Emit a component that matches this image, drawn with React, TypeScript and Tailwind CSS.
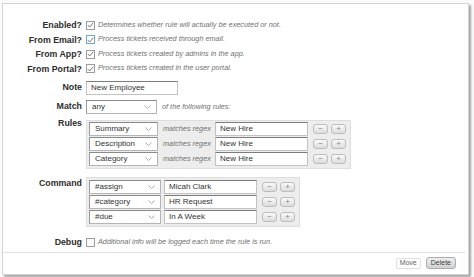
import React from "react";

const Chevron = () => (
  <svg width="7" height="4" viewBox="0 0 7 4" className="shrink-0">
    <polyline points="0.5,0.5 3.5,3.5 6.5,0.5" fill="none" stroke="#9a9a9a" strokeWidth="0.8" />
  </svg>
);

const Select = ({ value, w }: { value: string; w: string }) => (
  <div
    className={`${w} h-[14px] flex items-center justify-between bg-white border border-[#b5b5b5] border-t-[#8a8a8a] border-l-[#9a9a9a] pl-[5px] pr-[5px] text-[8px] text-[#333]`}
  >
    <span>{value}</span>
    <Chevron />
  </div>
);

const Input = ({ value, w }: { value: string; w: string }) => (
  <div
    className={`${w} h-[14px] flex items-center bg-white border border-[#c2c2c2] border-t-[#7c7c7c] pl-[4px] text-[8px] text-[#333]`}
  >
    {value}
  </div>
);

const SmallButton = ({ label }: { label: string }) => (
  <div className="w-[15px] h-[10px] flex items-center justify-center rounded-[3px] border border-[#bdbdbd] bg-gradient-to-b from-[#fafafa] to-[#dcdcdc] text-[8px] leading-none text-[#888]">
    {label}
  </div>
);

const Check = ({ checked, focus }: { checked?: boolean; focus?: boolean }) => (
  <div
    className={`w-[9px] h-[9px] shrink-0 flex items-center justify-center bg-white border ${
      focus ? "border-[#6fa8d8]" : "border-[#9d9d9d]"
    }`}
  >
    {checked && (
      <svg width="7" height="6" viewBox="0 0 7 6">
        <polyline points="0.8,3 2.7,5 6.3,0.7" fill="none" stroke="#6a6a6a" strokeWidth="0.9" />
      </svg>
    )}
  </div>
);

const Label = ({ text }: { text: string }) => (
  <div className="w-[79px] shrink-0 text-right font-bold text-[8.8px] leading-[12px] text-[#2e2e2e]">
    {text}
  </div>
);

const flags = [
  { label: "Enabled?", desc: "Determines whether rule will actually be executed or not." },
  { label: "From Email?", desc: "Process tickets received through email.", focus: true },
  { label: "From App?", desc: "Process tickets created by admins in the app." },
  { label: "From Portal?", desc: "Process tickets created in the user portal." },
];

const rules = ["Summary", "Description", "Category"];

const commands = [
  { cmd: "#assign", value: "Micah Clark" },
  { cmd: "#category", value: "HR Request" },
  { cmd: "#due", value: "In A Week" },
];

export default function App() {
  return (
    <div
      className="w-[474px] h-[277px] bg-[#fbfbfb] pt-[3px] pl-[2px]"
      style={{ fontFamily: '"Liberation Sans", Arial, sans-serif' }}
    >
      <div className="w-[467px] h-[272px] bg-white border border-[#d4d4d4] shadow-[2px_2px_2px_rgba(0,0,0,0.35)] flex flex-col">
        {/* Flags */}
        <div className="mt-[14px] flex flex-col">
          {flags.map((f) => (
            <div key={f.label} className="h-[14.5px] flex items-center">
              <Label text={f.label} />
              <div className="ml-[4px] flex items-center gap-[3px]">
                <Check checked focus={f.focus} />
                <span className="italic text-[7.3px] text-[#707070]">{f.desc}</span>
              </div>
            </div>
          ))}
        </div>

        {/* Note */}
        <div className="mt-[5px] flex items-start">
          <Label text="Note" />
          <div className="ml-[4px]">
            <Input value="New Employee" w="w-[92px]" />
          </div>
        </div>

        {/* Match */}
        <div className="mt-[5px] flex items-start">
          <Label text="Match" />
          <div className="ml-[4px] flex items-center gap-[5px]">
            <Select value="any" w="w-[71px]" />
            <span className="italic text-[7.3px] text-[#707070]">of the following rules:</span>
          </div>
        </div>

        {/* Rules */}
        <div className="mt-[3px] flex items-start">
          <Label text="Rules" />
          <div className="ml-[4px] mt-[3px] bg-[#ededed] border border-[#dedede] pl-[2px] pr-[4px] pt-[1px] pb-[2px] flex flex-col gap-y-[1px]">
            {rules.map((r) => (
              <div key={r} className="h-[14px] flex items-center">
                <Select value={r} w="w-[69px]" />
                <span className="ml-[5px] w-[52px] italic text-[7.3px] text-[#707070]">matches regex</span>
                <Input value="New Hire" w="w-[93px]" />
                <div className="ml-[5px] flex gap-[3px]">
                  <SmallButton label="−" />
                  <SmallButton label="+" />
                </div>
              </div>
            ))}
          </div>
        </div>

        {/* Command */}
        <div className="mt-[8px] flex items-start">
          <Label text="Command" />
          <div className="ml-[4px] bg-[#ededed] border border-[#dedede] pl-[2px] pr-[4px] pt-[2px] pb-[2px] flex flex-col gap-y-[1px]">
            {commands.map((c) => (
              <div key={c.cmd} className="h-[14px] flex items-center">
                <Select value={c.cmd} w="w-[72px]" />
                <div className="ml-[3px]">
                  <Input value={c.value} w="w-[93px]" />
                </div>
                <div className="ml-[5px] flex gap-[3px]">
                  <SmallButton label="−" />
                  <SmallButton label="+" />
                </div>
              </div>
            ))}
          </div>
        </div>

        {/* Debug */}
        <div className="mt-[9px] h-[12px] flex items-center">
          <Label text="Debug" />
          <div className="ml-[4px] flex items-center gap-[3px]">
            <Check />
            <span className="italic text-[7.3px] text-[#707070]">
              Additional info will be logged each time the rule is run.
            </span>
          </div>
        </div>

        {/* Footer */}
        <div className="mt-[4px] mr-[2px] border-t border-[#e2e2e2] flex justify-end items-center gap-[5px] pt-[4px] pr-[10px]">
          <div className="h-[11px] px-[3px] flex items-center border border-[#e0e0e0] rounded-[2px] bg-white text-[7px] text-[#666]">
            Move
          </div>
          <div className="h-[12px] px-[4px] flex items-center border border-[#adadad] rounded-[3px] bg-gradient-to-b from-[#eeeeee] to-[#d2d2d2] text-[7px] text-[#444]">
            Delete
          </div>
        </div>
      </div>
    </div>
  );
}
